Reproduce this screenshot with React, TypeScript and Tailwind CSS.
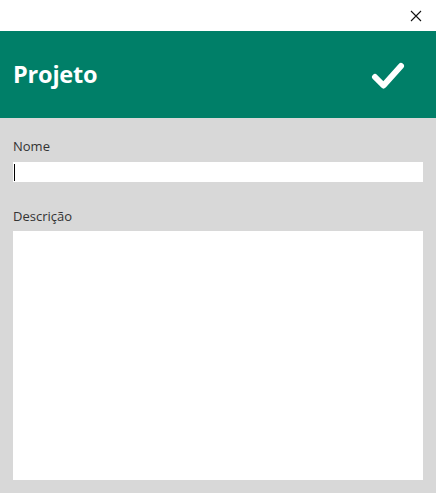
import { useState } from "react";

const CheckIcon = () => (
  <svg width="34" height="30" viewBox="0 0 34 30" fill="none">
    <path d="M4 17 L12.5 25.5 L30 6" stroke="white" strokeWidth="6" strokeLinecap="round" strokeLinejoin="round" />
  </svg>
);

const CloseIcon = () => (
  <svg width="12" height="12" viewBox="0 0 12 12" fill="none">
    <path d="M1 1 L11 11 M11 1 L1 11" stroke="#111" strokeWidth="1.1" />
  </svg>
);

const App = () => {
  const [nome, setNome] = useState("");
  const [descricao, setDescricao] = useState("");

  return (
    <div className="h-[493px] w-[436px] flex flex-col bg-[#d8d8d8] font-['Open_Sans',sans-serif]">
      {/* Window title bar */}
      <div className="h-[31px] bg-white flex items-center justify-end pr-[10px]">
        <button className="w-[20px] h-[20px] flex items-center justify-center">
          <CloseIcon />
        </button>
      </div>

      {/* Header */}
      <div className="h-[87px] bg-[#007f68] flex items-center justify-between pl-[13px] pr-[31px]">
        <h1 className="text-white text-[23.5px] font-bold leading-none tracking-[-0.2px]">Projeto</h1>
        <button className="pt-[1px]">
          <CheckIcon />
        </button>
      </div>

      {/* Form */}
      <div className="flex-1 flex flex-col px-[13px] pt-[20px] pb-[13px]">
        <label className="text-[13px] leading-[17px] text-[#333]">Nome</label>
        <div className="mt-[7px] h-[20px] bg-white flex items-center">
          <span className="ml-[1px] w-[1px] h-[17px] bg-black" />
          <input
            value={nome}
            onChange={(e) => setNome(e.target.value)}
            className="flex-1 h-full bg-transparent outline-none px-[1px] text-[12px]"
          />
        </div>
        <label className="mt-[26px] text-[13px] leading-[17px] text-[#333]">Descrição</label>
        <textarea
          value={descricao}
          onChange={(e) => setDescricao(e.target.value)}
          className="mt-[6px] flex-1 bg-white outline-none resize-none px-[1px] text-[12px]"
        />
      </div>
    </div>
  );
};

export default App;
